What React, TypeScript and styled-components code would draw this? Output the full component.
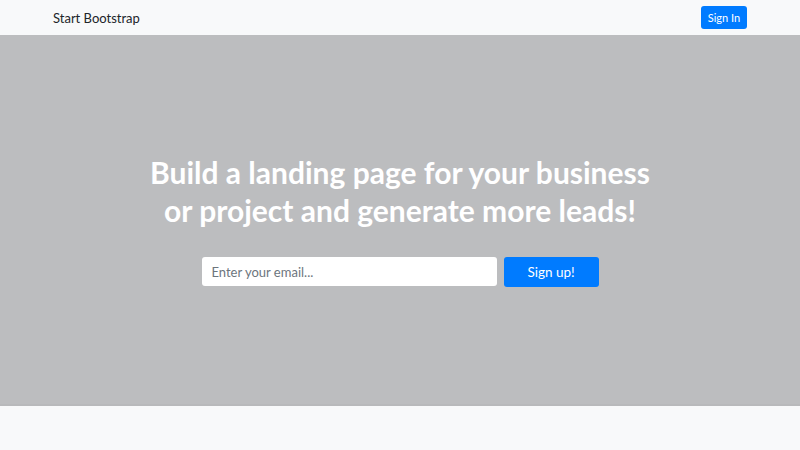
import React from "react";
import styled, { createGlobalStyle } from "styled-components";

const GlobalStyle = createGlobalStyle`
  html, body {
    margin: 0;
    padding: 0;
    background-color: #f8f9fa;
    font-family: "Lato", "Liberation Sans", sans-serif;
    color: #212529;
  }
  * {
    box-sizing: border-box;
  }
`;

export default function App() {
  return (
    <>
      <GlobalStyle />
      <Navbar>
        <Brand>Start Bootstrap</Brand>
        <NavButton>Sign In</NavButton>
      </Navbar>
      <Masthead>
        <Heading>
          Build a landing page for your business or project and generate more
          leads!
        </Heading>
        <SignupForm onSubmit={(e) => e.preventDefault()}>
          <EmailInput type="email" placeholder="Enter your email..." />
          <SubmitButton type="submit">Sign up!</SubmitButton>
        </SignupForm>
      </Masthead>
      <Below />
    </>
  );
}

const Navbar = styled.nav`
  height: 35px;
  background-color: #f8f9fa;
  display: flex;
  align-items: center;
  justify-content: space-between;
  padding: 0 53px 0 53px;
`;

const Brand = styled.a`
  font-size: 13px;
  color: #212529;
  cursor: pointer;
`;

const NavButton = styled.button`
  width: 46px;
  height: 23px;
  padding: 0;
  border: none;
  border-radius: 3px;
  background-color: #007bff;
  color: #fff;
  font-family: "Lato", "Liberation Sans", sans-serif;
  font-size: 11px;
  cursor: pointer;
`;

const Masthead = styled.header`
  height: 371px;
  background-color: #bcbdbf;
  border-bottom: 2px solid #b8b9bb;
  display: flex;
  flex-direction: column;
  align-items: center;
  justify-content: center;
  padding-top: 1px;
`;

const Heading = styled.h1`
  width: 515px;
  margin: 0 0 28px;
  color: #fff;
  font-size: 30px;
  font-weight: 700;
  line-height: 38px;
  text-align: center;
`;

const SignupForm = styled.form`
  display: flex;
  gap: 7px;
  margin: 0;
`;

const EmailInput = styled.input`
  width: 295px;
  height: 29px;
  border: none;
  border-radius: 3px;
  background: #fff;
  padding: 0 10px;
  font-family: "Lato", "Liberation Sans", sans-serif;
  font-size: 13px;
  color: #495057;

  &::placeholder {
    color: #6c757d;
  }
`;

const SubmitButton = styled.button`
  width: 95px;
  height: 30px;
  border: none;
  border-radius: 3px;
  background-color: #007bff;
  color: #fff;
  font-family: "Lato", "Liberation Sans", sans-serif;
  font-size: 13.5px;
  cursor: pointer;
`;

const Below = styled.section`
  height: 44px;
  background-color: #f8f9fa;
`;
